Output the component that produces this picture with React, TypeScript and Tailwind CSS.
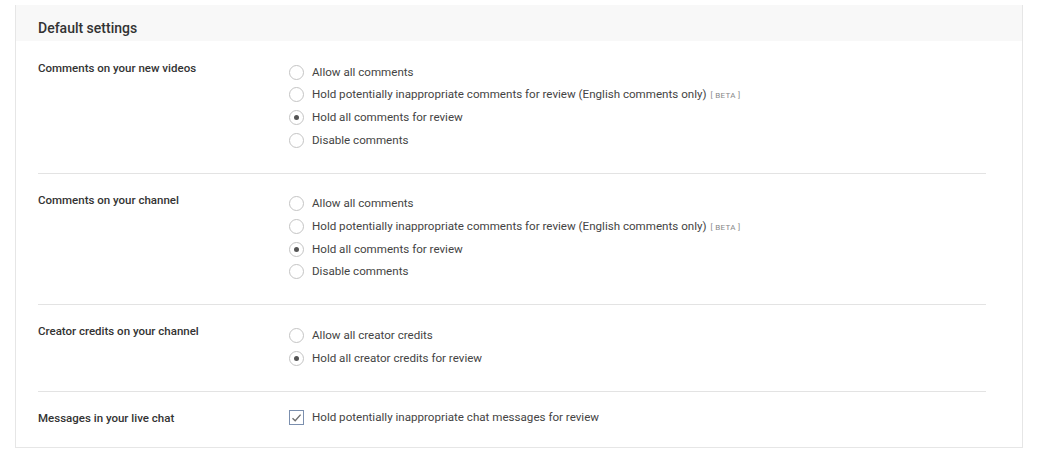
import React from "react";

type Option = { label: string; beta?: boolean; checked?: boolean };

type Section = {
  title: string;
  kind: "radio" | "checkbox";
  options: Option[];
};

const sections: Section[] = [
  {
    title: "Comments on your new videos",
    kind: "radio",
    options: [
      { label: "Allow all comments" },
      { label: "Hold potentially inappropriate comments for review (English comments only)", beta: true },
      { label: "Hold all comments for review", checked: true },
      { label: "Disable comments" },
    ],
  },
  {
    title: "Comments on your channel",
    kind: "radio",
    options: [
      { label: "Allow all comments" },
      { label: "Hold potentially inappropriate comments for review (English comments only)", beta: true },
      { label: "Hold all comments for review", checked: true },
      { label: "Disable comments" },
    ],
  },
  {
    title: "Creator credits on your channel",
    kind: "radio",
    options: [
      { label: "Allow all creator credits" },
      { label: "Hold all creator credits for review", checked: true },
    ],
  },
  {
    title: "Messages in your live chat",
    kind: "checkbox",
    options: [{ label: "Hold potentially inappropriate chat messages for review", checked: true }],
  },
];

// padding per section, tuned by eye
const pads = ["pt-[20px] pb-[21px]", "pt-[19px] pb-[21px]", "pt-[19px] pb-[21px]", "pt-[15px] pb-[18px]"];

function Radio({ checked }: { checked?: boolean }) {
  return (
    <span className="w-[15px] h-[15px] rounded-full border border-[#c4c4c4] bg-white flex items-center justify-center shrink-0">
      {checked && <span className="w-[5px] h-[5px] rounded-full bg-[#555]" />}
    </span>
  );
}

function Checkbox({ checked }: { checked?: boolean }) {
  return (
    <span className="w-[15px] h-[15px] border border-[#7b8fae] bg-white flex items-center justify-center shrink-0">
      {checked && (
        <svg width="11" height="10" viewBox="0 0 11 10">
          <path d="M1.5 5.2 L4.2 7.8 L9.6 1.6" fill="none" stroke="#6f6f6f" strokeWidth="1.4" />
        </svg>
      )}
    </span>
  );
}

export default function App() {
  return (
    <div className="min-h-screen bg-white pt-[5px] pl-[15px] font-['Roboto',sans-serif]">
      <div className="w-[1008px] border-x border-b border-[#e6e6e6]">
        <div className="h-[36px] bg-[#f8f8f8] pl-[22px] pt-[15px]">
          <div className="text-[14px] leading-[17px] font-medium text-[#333]">Default settings</div>
        </div>

        <div className="pl-[22px] pr-[36px]">
          {sections.map((s, i) => {
            const last = i === sections.length - 1;
            return (
              <div key={s.title} className={`flex ${pads[i]} ${last ? "" : "border-b border-[#e3e3e3]"}`}>
                <div
                  className={`w-[251px] shrink-0 text-[11.5px] font-medium text-[#333] ${
                    last ? "leading-[22.67px]" : "leading-[14px]"
                  }`}
                >
                  {s.title}
                </div>
                <div className="flex flex-col">
                  {s.options.map((o) => (
                    <div
                      key={o.label}
                      className="h-[22.67px] flex items-center gap-[8px] text-[11.6px] text-[#444]"
                    >
                      {s.kind === "radio" ? <Radio checked={o.checked} /> : <Checkbox checked={o.checked} />}
                      <span>
                        {o.label}
                        {o.beta && (
                          <span className="ml-[4px] text-[8px] tracking-[0.3px] text-[#888]">[ BETA ]</span>
                        )}
                      </span>
                    </div>
                  ))}
                </div>
              </div>
            );
          })}
        </div>
      </div>
    </div>
  );
}
